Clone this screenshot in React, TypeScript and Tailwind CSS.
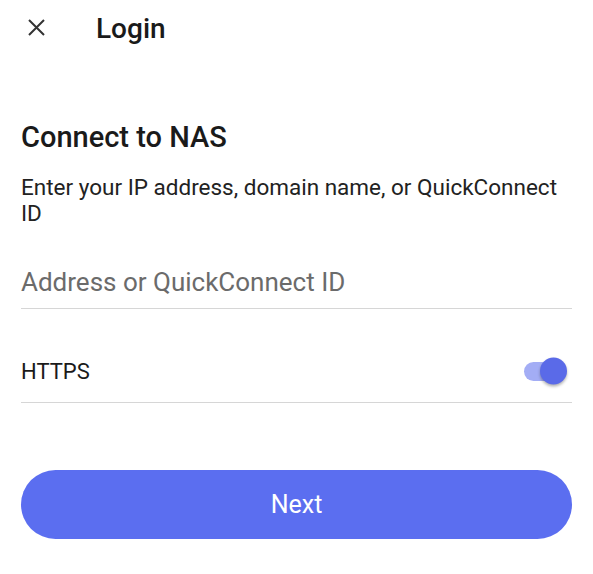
import React, { useState } from 'react';

const App: React.FC = () => {
  const [https, setHttps] = useState(true);

  return (
    <div className="min-h-screen w-full bg-white font-['Roboto',sans-serif] text-[#1a1a1a]">
      {/* Header */}
      <div className="flex h-[58px] items-center">
        <button className="mb-[4px] ml-[28px] flex h-[17px] w-[17px] items-center justify-center text-[#333]">
          <svg width="17" height="17" viewBox="0 0 17 17" fill="none" stroke="currentColor" strokeWidth="2">
            <path d="M1 1 L16 16 M16 1 L1 16" />
          </svg>
        </button>
        <h1 className="ml-[51px] text-[28px] font-medium leading-none">Login</h1>
      </div>

      <div className="px-[21px] pt-[62px]">
        <h2 className="text-[29px] font-medium leading-[34px]">Connect to NAS</h2>
        <p className="mt-[20px] text-[22.5px] leading-[26px] text-[#222]">
          Enter your IP address, domain name, or QuickConnect ID
        </p>

        {/* Address input */}
        <div className="mt-[41px] border-b border-[#d6d6d6] pb-[10px]">
          <input
            className="w-full bg-transparent text-[26px] leading-[30px] outline-none placeholder:text-[#6b6b6b]"
            placeholder="Address or QuickConnect ID"
          />
        </div>

        {/* HTTPS row */}
        <div className="flex h-[94px] items-center justify-between border-b border-[#d6d6d6] pt-[31px]">
          <span className="text-[22px]">HTTPS</span>
          <button
            onClick={() => setHttps(!https)}
            className="relative mr-[11px] h-[19px] w-[37px] rounded-full bg-[#a3adf5]"
          >
            <span
              className={`absolute top-1/2 h-[27px] w-[27px] -translate-y-1/2 rounded-full bg-[#5a6ae8] shadow-[0_2px_3px_rgba(0,0,0,0.3)] ${
                https ? 'left-[16px]' : 'left-[-6px]'
              }`}
            />
          </button>
        </div>

        {/* Next */}
        <button className="mt-[67px] flex h-[69px] w-full items-center justify-center rounded-full bg-[#5b6ef0] text-[25px] text-white">
          Next
        </button>
      </div>
    </div>
  );
};

export default App;
